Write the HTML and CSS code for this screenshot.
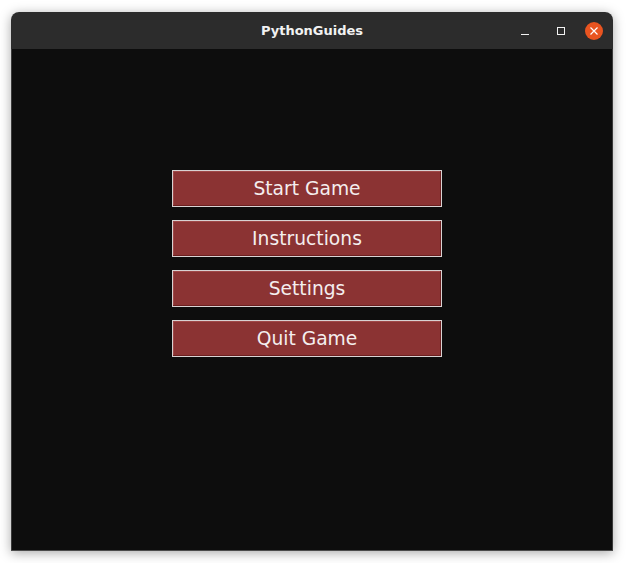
FILE: index.html
```html
<!DOCTYPE html>
<html>
<head>
    <title>PythonGuides</title>
    <link rel="stylesheet" href="styles.css">
</head>
<body>
    <div class="window">
        <div class="titlebar">
            <span class="title">PythonGuides</span>
            <div class="controls">
                <svg class="ctl min" width="16" height="16" viewBox="0 0 16 16"><rect x="4" y="11" width="8" height="1" fill="#f2f2f2"/></svg>
                <svg class="ctl" width="16" height="16" viewBox="0 0 16 16"><rect x="4.5" y="4.5" width="7" height="7" fill="none" stroke="#f2f2f2" stroke-width="1"/></svg>
                <svg class="ctl close" width="20" height="20" viewBox="0 0 20 20"><circle cx="10" cy="10" r="9" fill="#e95420"/><path d="M6.5 6.5 L13.5 13.5 M13.5 6.5 L6.5 13.5" stroke="#fff" stroke-width="1.2"/></svg>
            </div>
        </div>
        <div class="content">
            <div class="menu">
                <button class="btn">Start Game</button>
                <button class="btn">Instructions</button>
                <button class="btn">Settings</button>
                <button class="btn">Quit Game</button>
            </div>
        </div>
    </div>
</body>
</html>
```

FILE: styles.css
```css
* {
    padding: 0;
    margin: 0;
    box-sizing: border-box;
}
body {
    width: 626px;
    height: 563px;
    background-color: #ffffff;
    padding: 12px 13px 12px 11px;
    font-family: "DejaVu Sans", sans-serif;
}
.window {
    height: 539px;
    display: flex;
    flex-direction: column;
    border-radius: 8px 8px 0 0;
    overflow: hidden;
    box-shadow: 0 2px 12px rgba(0, 0, 0, 0.35);
    border-bottom: 1px solid #4a4a4a;
}
.titlebar {
    height: 37px;
    background-color: #2c2c2c;
    display: flex;
    align-items: center;
    justify-content: center;
    position: relative;
}
.title {
    color: #f2f2f2;
    font-size: 13px;
    font-weight: bold;
}
.controls {
    position: absolute;
    right: 9px;
    top: 9px;
    display: flex;
    align-items: center;
    gap: 15px;
}
.ctl {
    display: block;
}
.min {
    margin-right: 5px;
}
.content {
    flex: 1;
    background-color: #0d0d0d;
    border-left: 1px solid #3a3a3a;
    border-right: 1px solid #3a3a3a;
    padding: 121px 0 0 160px;
}
.menu {
    display: flex;
    flex-direction: column;
    gap: 13px;
    width: 270px;
}
.btn {
    height: 37px;
    background-color: #8b3333;
    color: #f4eeee;
    font-family: "DejaVu Sans", sans-serif;
    font-size: 18.7px;
    border: 1px solid #d8d2d2;
    box-shadow: inset -1px -1px 0 #6a1f1f, inset 1px 1px 0 #a04848;
}
```
